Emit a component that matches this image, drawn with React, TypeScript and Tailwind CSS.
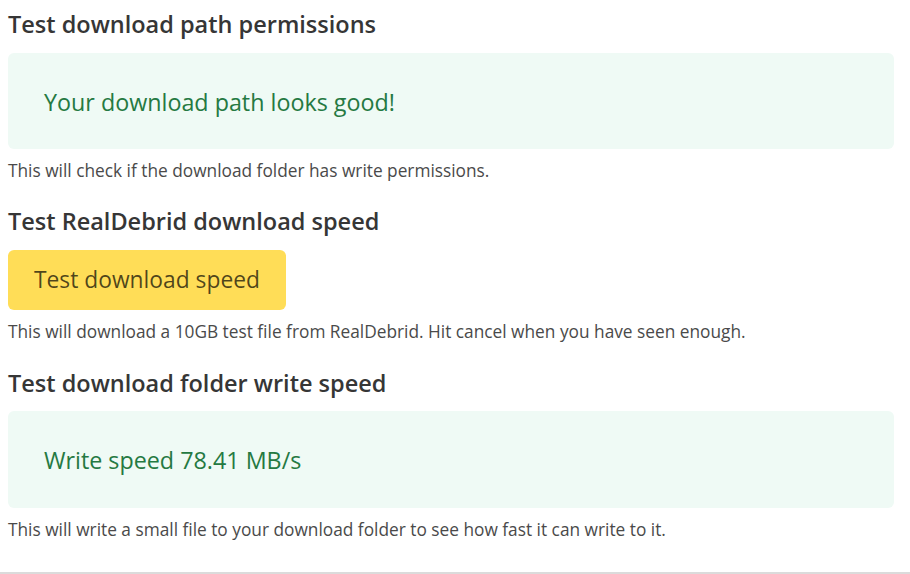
import React from "react";

const font = { fontFamily: '"Open Sans", "Noto Sans", sans-serif' };

function Heading({ children, className = "" }: { children: React.ReactNode; className?: string }) {
  return (
    <h2 className={`h-[30px] text-[23.5px] leading-[30px] font-semibold text-[#363636] whitespace-nowrap ${className}`}>
      {children}
    </h2>
  );
}

function Help({ children, className = "" }: { children: React.ReactNode; className?: string }) {
  return (
    <p className={`h-[24px] text-[17.3px] leading-[24px] text-[#4a4a4a] whitespace-nowrap ${className}`}>{children}</p>
  );
}

function Notice({ children, className = "" }: { children: React.ReactNode; className?: string }) {
  return (
    <div
      className={`flex items-center rounded-[6px] bg-[#effaf5] pl-[36px] text-[23.3px] leading-[36px] text-[#257942] ${className}`}
    >
      {children}
    </div>
  );
}

export default function App() {
  return (
    <div className="h-[574px] w-[910px] overflow-hidden bg-white" style={font}>
      <div className="flex h-[572px] flex-col pl-2 pr-4 pt-[9px]">
        <Heading>Test download path permissions</Heading>
        <Notice className="mt-[14px] h-[96px] pt-[1px]">Your download path looks good!</Notice>
        <Help className="mt-[10px]">This will check if the download folder has write permissions.</Help>

        <Heading className="mt-[23px]">Test RealDebrid download speed</Heading>
        <div className="mt-[14px] flex">
          <button
            type="button"
            className="h-[60px] rounded-[6px] bg-[#ffdd57] px-[26px] text-[22.8px] leading-[36px] text-[rgba(0,0,0,0.7)]"
          >
            Test download speed
          </button>
        </div>
        <Help className="mt-[10px]">
          This will download a 10GB test file from RealDebrid. Hit cancel when you have seen enough.
        </Help>

        <Heading className="mt-[24px]">Test download folder write speed</Heading>
        <Notice className="mt-[13px] h-[97px]">Write speed 78.41 MB/s</Notice>
        <Help className="mt-[10px]">
          This will write a small file to your download folder to see how fast it can write to it.
        </Help>
      </div>
      <div className="h-[2px] bg-[#dbdbdb]" />
    </div>
  );
}
